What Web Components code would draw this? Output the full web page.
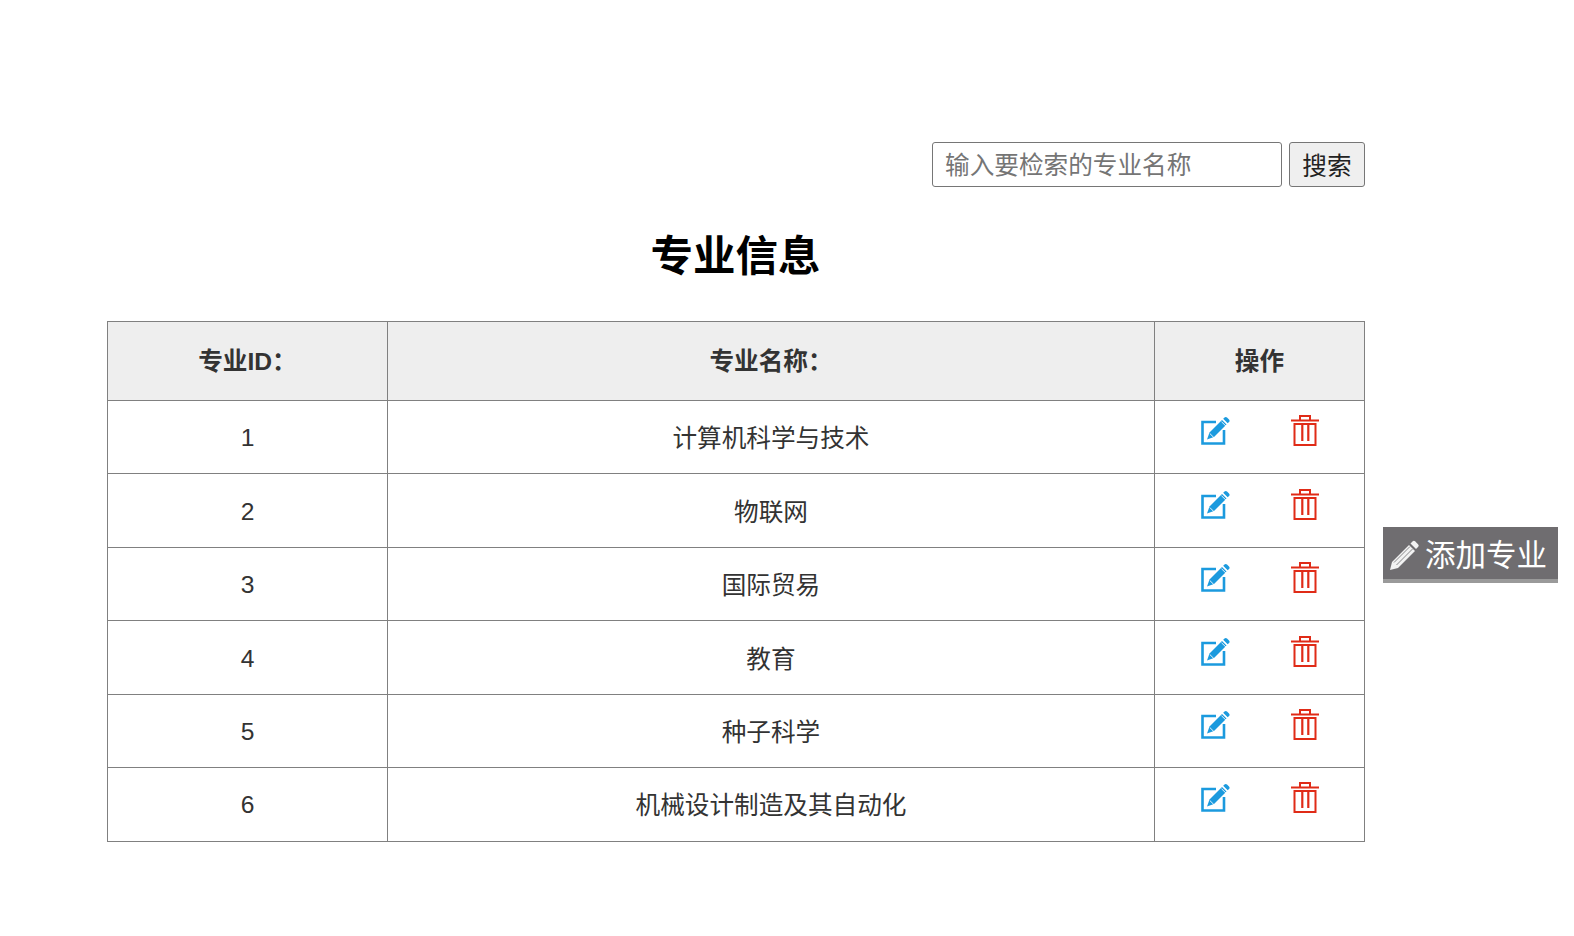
<!DOCTYPE html>
<html lang="zh"><head><meta charset="utf-8"><title>专业信息</title>
<style>
html,body{margin:0;padding:0;background:#fff}
body{font-family:"Liberation Sans","Noto Sans CJK SC",sans-serif;color:#333}
</style></head><body>
<major-page></major-page>
<script>
const EDIT=`<svg width="30" height="30" viewBox="0 0 30 30" aria-hidden="true"><path d="M24 14v13.500H2.500V6H16" fill="none" stroke="#1b9ade" stroke-width="2.600"/><path fill="#1b9ade" d="M7 23.500l2.500-7L22 4l4.500 4.500L14 21z"/><path fill="#1b9ade" d="M23.200 2.800l1.300-1.300a1.800 1.800 0 0 1 2.500 0l2 2a1.800 1.800 0 0 1 0 2.500L27.700 7.300z"/><path stroke="#fff" stroke-width=".9" d="M9.800 17.500l4.700 4.700M21.500 5.800l4.700 4.500" fill="none"/></svg>`;
const TRASH=`<svg width="30" height="32" viewBox="0 0 30 32" aria-hidden="true"><g fill="none" stroke="#e02b17" stroke-width="2"><path d="M1 6.500h28" /><path d="M10 6V2h10v4"/><path d="M4.500 10v21h21V10z"/><path d="M12.300 11v16M18.300 11v16" stroke-width="2.200"/></g></svg>`;
class SearchBar extends HTMLElement{constructor(){super();this.attachShadow({mode:'open'}).innerHTML=`<style>
:host{display:flex;justify-content:flex-end;gap:7px;box-sizing:border-box;height:45px}
input{box-sizing:border-box;width:350px;height:45px;border:1px solid #767676;border-radius:3px;padding:2px 12px 0;font:24.640px "Liberation Sans","Noto Sans CJK SC",sans-serif;color:#333;background:#fff;outline:0}
input::placeholder{color:#757575;opacity:1}
button{box-sizing:border-box;width:76px;height:45px;border:1px solid #767676;border-radius:3px;padding:0 0 2px;background:#efefef;color:#222;font:24.640px "Liberation Sans","Noto Sans CJK SC",sans-serif}
</style><input placeholder="输入要检索的专业名称"><button>搜索</button>`}}
customElements.define('search-bar',SearchBar);
class PageTitle extends HTMLElement{constructor(){super();this.attachShadow({mode:'open'}).innerHTML=`<style>
:host{display:block;text-align:center;font-size:42.500px;font-weight:700;color:#000;line-height:60px}
</style><slot></slot>`}}
customElements.define('page-title',PageTitle);
class MajorTable extends HTMLElement{constructor(){super();
const rows=['计算机科学与技术','物联网','国际贸易','教育','种子科学','机械设计制造及其自动化'];
this.attachShadow({mode:'open'}).innerHTML=`<style>
:host{display:block}
table{border-collapse:collapse;width:1257px;table-layout:fixed;font-size:24.640px;color:#333}
th,td{border:1px solid #808080;text-align:center;padding:0;box-sizing:border-box}
th{background:#eee;height:79px;padding-bottom:5px;font-weight:700}
td{height:73.450px}
td.id{padding-top:2px}
td.name{padding-bottom:2px}
.ops{display:flex;justify-content:center;gap:60px;margin-top:-14px}
.ops span{display:block;width:30px;height:32px}
.ops span:first-child svg{display:block;margin:2px 0 0 0}
</style><table><colgroup><col style="width:280px"><col style="width:767px"><col style="width:210px"></colgroup>
<thead><tr><th>专业ID&#xFF1A;</th><th>专业名称&#xFF1A;</th><th>操作</th></tr></thead><tbody>
${rows.map((r,i)=>`<tr><td class="id">${i+1}</td><td class="name">${r}</td><td><div class="ops"><span>${EDIT}</span><span>${TRASH}</span></div></td></tr>`).join('')}
</tbody></table>`}}
customElements.define('major-table',MajorTable);
class AddButton extends HTMLElement{constructor(){super();this.attachShadow({mode:'open'}).innerHTML=`<style>
:host{position:absolute;left:1383px;top:527px;width:175px;height:56px;box-sizing:border-box;background:#6f6d70;border-bottom:4px solid #9a9a9a;color:#fff;display:flex;align-items:center;gap:6px;padding-left:6px;font-size:30.500px;white-space:nowrap}
svg{flex:none;margin-top:4px}
span{margin-bottom:1px}
</style><svg width="30" height="32" viewBox="0 0 30 32" aria-hidden="true"><path fill="#f2f2f2" d="M1 31l2-8L20 6l6 6L9 29z"/><path fill="#f2f2f2" d="M21.500 4.500l2-2a2 2 0 0 1 2.800 0l2.700 2.700a2 2 0 0 1 0 2.800l-2 2z"/><path stroke="#8a898b" fill="none" d="M5 23.500L21 7.500M7.500 26L23.500 10"/></svg><span>添加专业</span>`}}
customElements.define('add-button',AddButton);
class MajorPage extends HTMLElement{constructor(){super();this.attachShadow({mode:'open'}).innerHTML=`<style>
:host{display:block;box-sizing:border-box;width:1574px;height:936px;padding:142px 0 0 108px;position:relative}
.col{width:1257px;margin-left:-1px;display:flex;flex-direction:column}
search-bar{margin-right:-1px}
page-title{margin:40px 0 34px}
</style><div class="col"><search-bar></search-bar><page-title>专业信息</page-title><major-table></major-table></div><add-button></add-button>`}}
customElements.define('major-page',MajorPage);
</script></body></html>
